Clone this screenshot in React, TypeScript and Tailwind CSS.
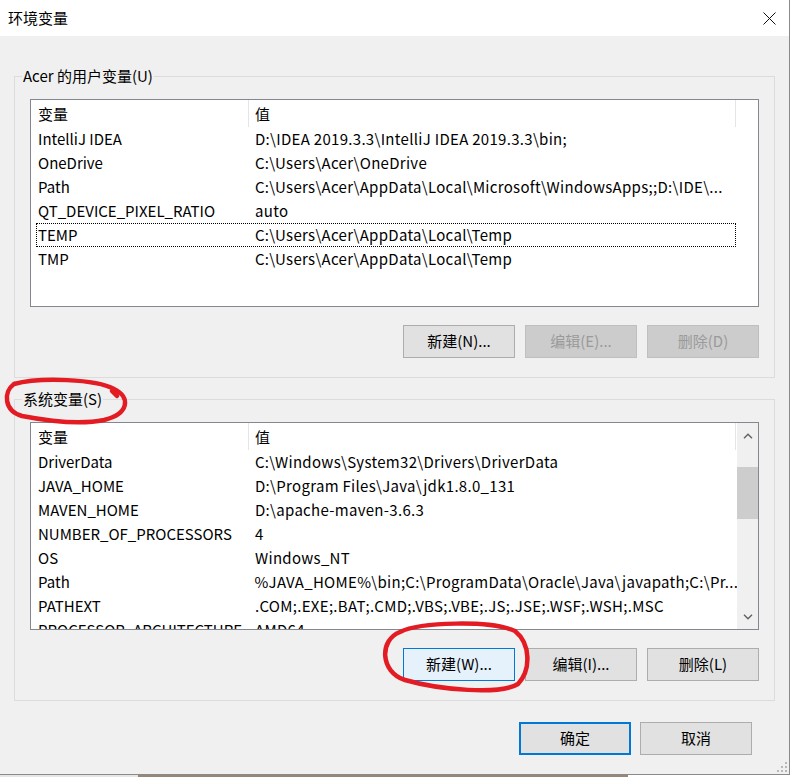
import React from 'react';

type Row = [string, string];

const userVars: Row[] = [
  ['IntelliJ IDEA', 'D:\\IDEA 2019.3.3\\IntelliJ IDEA 2019.3.3\\bin;'],
  ['OneDrive', 'C:\\Users\\Acer\\OneDrive'],
  ['Path', 'C:\\Users\\Acer\\AppData\\Local\\Microsoft\\WindowsApps;;D:\\IDE\\...'],
  ['QT_DEVICE_PIXEL_RATIO', 'auto'],
  ['TEMP', 'C:\\Users\\Acer\\AppData\\Local\\Temp'],
  ['TMP', 'C:\\Users\\Acer\\AppData\\Local\\Temp'],
];

const sysVars: Row[] = [
  ['DriverData', 'C:\\Windows\\System32\\Drivers\\DriverData'],
  ['JAVA_HOME', 'D:\\Program Files\\Java\\jdk1.8.0_131'],
  ['MAVEN_HOME', 'D:\\apache-maven-3.6.3'],
  ['NUMBER_OF_PROCESSORS', '4'],
  ['OS', 'Windows_NT'],
  ['Path', '%JAVA_HOME%\\bin;C:\\ProgramData\\Oracle\\Java\\javapath;C:\\Pr...'],
  ['PATHEXT', '.COM;.EXE;.BAT;.CMD;.VBS;.VBE;.JS;.JSE;.WSF;.WSH;.MSC'],
  ['PROCESSOR_ARCHITECTURE', 'AMD64'],
];

type BtnKind = 'normal' | 'disabled' | 'focused' | 'default';

const WinButton: React.FC<{ label: string; kind?: BtnKind }> = ({ label, kind = 'normal' }) => {
  const styles: Record<BtnKind, string> = {
    normal: 'bg-[#e1e1e1] border border-[#adadad] text-black',
    disabled: 'bg-[#cccccc] border border-[#bfbfbf] text-[#9a9a9a]',
    focused: 'bg-[#e5f1fb] border border-[#0078d7] text-black',
    default: 'bg-[#e1e1e1] border-2 border-[#0078d7] text-black',
  };
  return (
    <div className={`w-[112px] h-[33px] flex items-center justify-center text-[15px] ${styles[kind]}`}>
      {label}
    </div>
  );
};

const ListHeader: React.FC<{ valueWidth: string }> = ({ valueWidth }) => (
  <div className="flex h-[27px] text-[15px] leading-[27px]">
    <div className="w-[218px] pl-[7px] border-r border-[#e5e5e5]">变量</div>
    <div className={`${valueWidth} pl-[6px] border-r border-[#e5e5e5]`}>值</div>
  </div>
);

const VarRows: React.FC<{ rows: Row[]; focusIndex?: number }> = ({ rows, focusIndex }) => (
  <div>
    {rows.map(([name, value], i) => (
      <div key={name + i} className="relative flex h-[24px] text-[15px] leading-[23px] whitespace-nowrap">
        <div className="w-[218px] pl-[7px] overflow-hidden">{name}</div>
        <div className="pl-[6px] overflow-hidden tracking-[0.3px]">{value}</div>
        {i === focusIndex && (
          <div className="absolute left-[5px] top-0 w-[700px] h-[24px] border border-dotted border-black" />
        )}
      </div>
    ))}
  </div>
);

const GroupBox: React.FC<{ title: string; children: React.ReactNode }> = ({ title, children }) => (
  <div className="relative w-[761px] h-[302px] border border-[#dcdcdc] pt-[22px] px-[15px]">
    <div className="absolute left-[7px] top-[-12px] px-[1px] bg-[#f0f0f0] text-[15px] leading-[22px]">{title}</div>
    {children}
  </div>
);

const Chevron: React.FC<{ up?: boolean }> = ({ up }) => (
  <svg width="10" height="6" viewBox="0 0 10 6" className="block">
    <path
      d={up ? 'M1 5.2 L5 1.2 L9 5.2' : 'M1 0.8 L5 4.8 L9 0.8'}
      fill="none"
      stroke="#606060"
      strokeWidth="1.4"
    />
  </svg>
);

export default function App() {
  return (
    <div className="relative w-[791px] h-[777px] bg-white text-black font-['Noto_Sans_CJK_SC','Noto_Sans',sans-serif]">
      <div className="w-[790px] border-r border-[#8a8a8a]">
        {/* title bar */}
        <div className="h-[36px] bg-white flex items-center justify-between pl-[8px] pr-[13px]">
          <span className="text-[15px]">环境变量</span>
          <svg width="13" height="13" viewBox="0 0 13 13">
            <path d="M0.5 0.5 L12.5 12.5 M12.5 0.5 L0.5 12.5" stroke="#111" strokeWidth="1" />
          </svg>
        </div>

        {/* body */}
        <div className="h-[738px] bg-[#f0f0f0] pt-[40px] px-[14px] flex flex-col">
          <GroupBox title="Acer 的用户变量(U)">
            <div className="w-[729px] h-[208px] border border-[#828790] bg-white overflow-hidden">
              <ListHeader valueWidth="w-[487px]" />
              <VarRows rows={userVars} focusIndex={4} />
            </div>
            <div className="mt-[18px] flex justify-end gap-[10px]">
              <WinButton label="新建(N)..." />
              <WinButton label="编辑(E)..." kind="disabled" />
              <WinButton label="删除(D)" kind="disabled" />
            </div>
          </GroupBox>

          <div className="mt-[21px]">
            <GroupBox title="系统变量(S)">
              <div className="w-[729px] h-[208px] border border-[#828790] bg-white overflow-hidden flex">
                <div className="w-[706px] h-full overflow-hidden">
                  <ListHeader valueWidth="w-[487px]" />
                  <VarRows rows={sysVars} />
                </div>
                <div className="w-[21px] h-full bg-[#f0f0f0] flex flex-col">
                  <div className="h-[24px] flex items-center justify-center pt-[1px]">
                    <Chevron up />
                  </div>
                  <div className="h-[20px]" />
                  <div className="h-[52px] bg-[#cdcdcd]" />
                  <div className="flex-1" />
                  <div className="h-[24px] flex items-center justify-center">
                    <Chevron />
                  </div>
                </div>
              </div>
              <div className="mt-[18px] flex justify-end gap-[10px]">
                <WinButton label="新建(W)..." kind="focused" />
                <WinButton label="编辑(I)..." />
                <WinButton label="删除(L)" />
              </div>
            </GroupBox>
          </div>

          <div className="mt-[21px] mr-[23px] flex justify-end gap-[9px]">
            <WinButton label="确定" kind="default" />
            <WinButton label="取消" />
          </div>

          {/* size grip */}
          <div className="mt-auto self-end -mr-[12px] mb-[2px] grid grid-cols-3 gap-[2px] w-[10px]">
            {[0, 0, 1, 0, 1, 1, 1, 1, 1].map((on, i) => (
              <div key={i} className={`w-[2px] h-[2px] ${on ? 'bg-[#b8b8b8]' : ''}`} />
            ))}
          </div>
        </div>
        <div className="h-[1px] bg-[#8a8a8a]" />
      </div>

      {/* desktop strip below the window */}
      <div className="flex h-[2px]">
        <div className="w-[138px] bg-[#e6e6e6]" />
        <div className="w-[490px] bg-[#9a8472]" />
        <div className="flex-1 bg-white" />
      </div>

      {/* red hand-drawn annotations */}
      <svg className="absolute inset-0 pointer-events-none" width="791" height="777" viewBox="0 0 791 777">
        <path
          d="M14 384 C40 377, 96 379, 114 389 C131 397, 129 414, 104 420 C80 425, 48 421, 22 416 C4 411, 3 392, 14 384 M112 391 L117 396"
          fill="none"
          stroke="#e31b23"
          strokeWidth="4.5"
          strokeLinecap="round"
          strokeLinejoin="round"
        />
        <path
          d="M400 632 C420 622, 490 620, 515 631 C531 644, 531 670, 518 684 C500 695, 440 690, 405 680 C380 672, 379 640, 400 632"
          fill="none"
          stroke="#e31b23"
          strokeWidth="4.5"
          strokeLinecap="round"
          strokeLinejoin="round"
        />
      </svg>
    </div>
  );
}
